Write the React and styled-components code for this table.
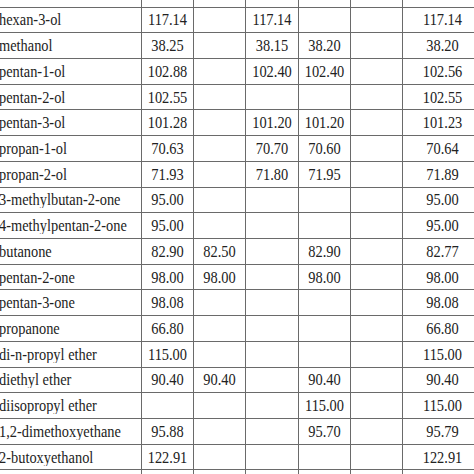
import React from "react";
import styled, { createGlobalStyle } from "styled-components";

const GlobalStyle = createGlobalStyle`
    html, body {
        margin: 0;
        padding: 0;
        width: 474px;
        height: 474px;
        overflow: hidden;
        background: #fff;
    }
`;

const Page = styled.div`
    width: 474px;
    height: 474px;
    overflow: hidden;
    background: #fff;
`;

const Grid = styled.div`
    display: grid;
    grid-template-columns: 146px 52px 52px 53px 52px 52px 80px;
    grid-auto-rows: 25.72px;
    margin-left: -4px;
    margin-top: -18.2px;
    font-family: "Liberation Serif", "Times New Roman", serif;
    font-size: 14.4px;
    color: #222;
`;

const Cell = styled.div`
    display: flex;
    align-items: center;
    justify-content: ${(p) => (p.$name ? "flex-start" : "center")};
    padding-left: ${(p) => (p.$name ? "3px" : "0")};
    border-right: 1.5px solid #6a6a6a;
    border-bottom: 1.5px solid #6a6a6a;
    white-space: nowrap;
    overflow: hidden;
    box-sizing: border-box;
`;

const Text = styled.span`
    display: inline-block;
    transform: scaleY(1.12);
    transform-origin: center;
`;

const rows = [
    ["", "", "", "", "", "", ""],
    ["hexan-3-ol", "117.14", "", "117.14", "", "", "117.14"],
    ["methanol", "38.25", "", "38.15", "38.20", "", "38.20"],
    ["pentan-1-ol", "102.88", "", "102.40", "102.40", "", "102.56"],
    ["pentan-2-ol", "102.55", "", "", "", "", "102.55"],
    ["pentan-3-ol", "101.28", "", "101.20", "101.20", "", "101.23"],
    ["propan-1-ol", "70.63", "", "70.70", "70.60", "", "70.64"],
    ["propan-2-ol", "71.93", "", "71.80", "71.95", "", "71.89"],
    ["3-methylbutan-2-one", "95.00", "", "", "", "", "95.00"],
    ["4-methylpentan-2-one", "95.00", "", "", "", "", "95.00"],
    ["butanone", "82.90", "82.50", "", "82.90", "", "82.77"],
    ["pentan-2-one", "98.00", "98.00", "", "98.00", "", "98.00"],
    ["pentan-3-one", "98.08", "", "", "", "", "98.08"],
    ["propanone", "66.80", "", "", "", "", "66.80"],
    ["di-n-propyl ether", "115.00", "", "", "", "", "115.00"],
    ["diethyl ether", "90.40", "90.40", "", "90.40", "", "90.40"],
    ["diisopropyl ether", "", "", "", "115.00", "", "115.00"],
    ["1,2-dimethoxyethane", "95.88", "", "", "95.70", "", "95.79"],
    ["2-butoxyethanol", "122.91", "", "", "", "", "122.91"],
    ["", "", "", "", "", "", ""],
];

export default function App() {
    return (
        <Page>
            <GlobalStyle />
            <Grid>
                {rows.map((row, i) =>
                    row.map((value, j) => (
                        <Cell key={i + "-" + j} $name={j === 0}>
                            {value && <Text>{value}</Text>}
                        </Cell>
                    ))
                )}
            </Grid>
        </Page>
    );
}
